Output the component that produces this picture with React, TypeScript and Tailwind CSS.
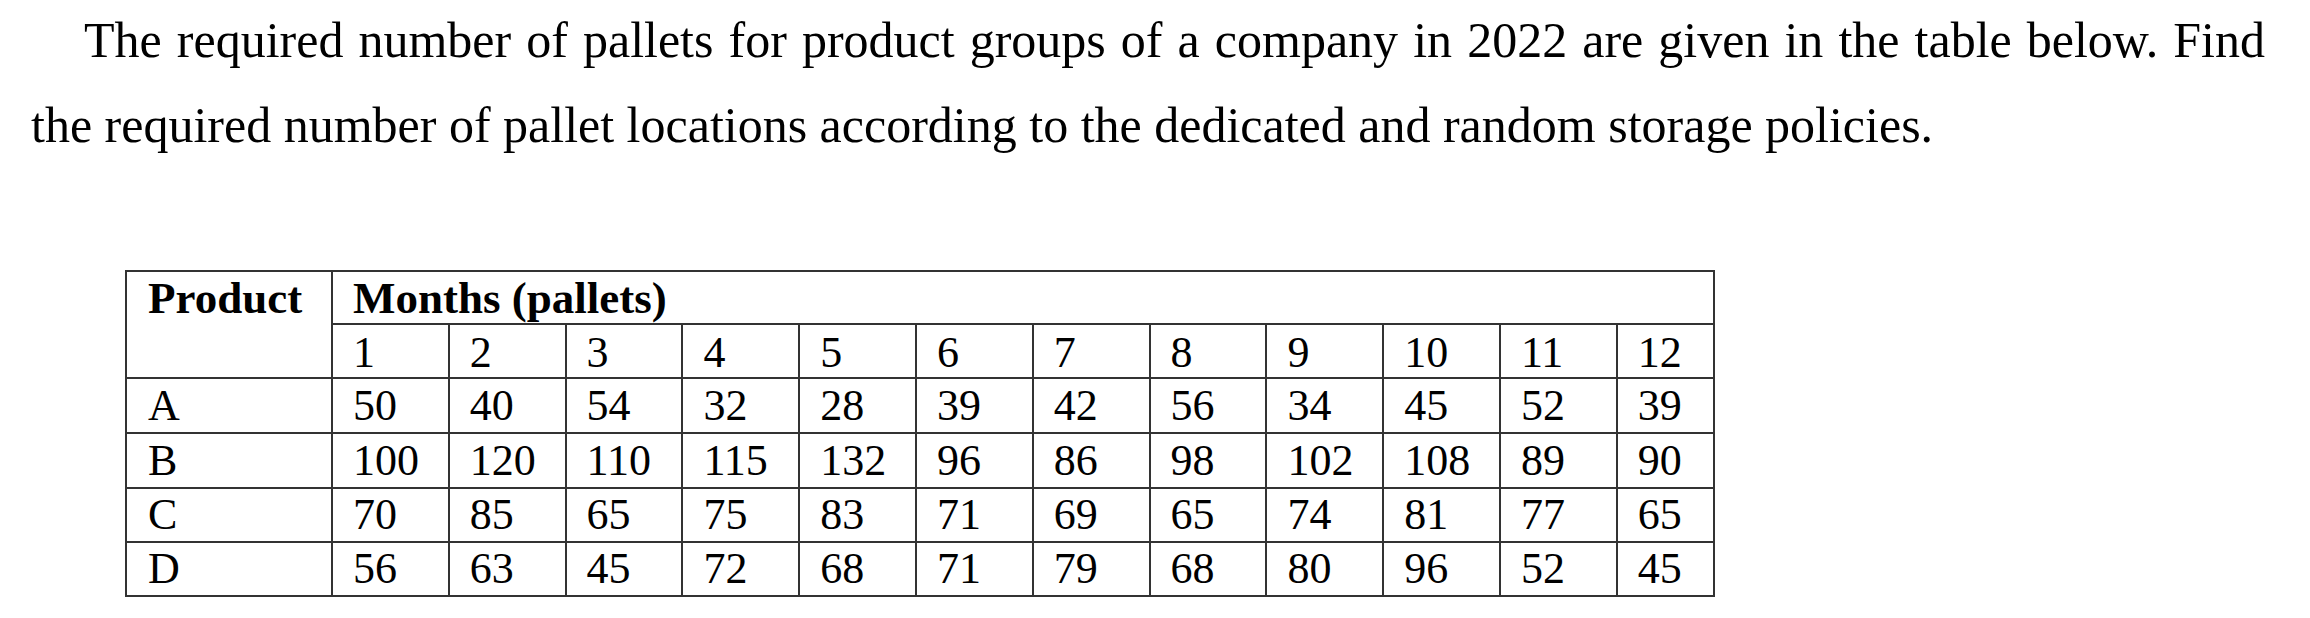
const rows: { name: string; values: number[] }[] = [
  { name: "A", values: [50, 40, 54, 32, 28, 39, 42, 56, 34, 45, 52, 39] },
  { name: "B", values: [100, 120, 110, 115, 132, 96, 86, 98, 102, 108, 89, 90] },
  { name: "C", values: [70, 85, 65, 75, 83, 71, 69, 65, 74, 81, 77, 65] },
  { name: "D", values: [56, 63, 45, 72, 68, 71, 79, 68, 80, 96, 52, 45] },
];

const months = [1, 2, 3, 4, 5, 6, 7, 8, 9, 10, 11, 12];
const rowHeights = ["h-[55px]", "h-[55px]", "h-[54px]", "h-[54px]"];

export default function App() {
  return (
    <div className="w-[2310px] h-[618px] bg-white text-black font-['Liberation_Serif',serif] overflow-hidden">
      <div className="pl-[31px] pr-[45px]">
        <p className="-mt-[2px] text-[50px] leading-[85px] text-justify indent-[53px]">
          The required number of pallets for product groups of a company in 2022 are given in the table below. Find
          the required number of pallet locations according to the dedicated and random storage policies.
        </p>
      </div>

      <div className="mt-[102px] pl-[125px]">
        <table className="table-fixed border-collapse w-[1588px] text-[44px] leading-none">
          <colgroup>
            <col className="w-[206px]" />
            {months.map((m) => (
              <col key={m} className={m === 12 ? "w-[97px]" : "w-[116.8px]"} />
            ))}
          </colgroup>
          <thead>
            <tr className="h-[53px]">
              <th
                rowSpan={2}
                className="border-2 border-[#333] align-top pt-[4px] pl-[21px] text-left text-[45px] font-bold"
              >
                Product
              </th>
              <th
                colSpan={12}
                className="border-2 border-[#333] align-top pt-[4px] pl-[20px] text-left text-[45px] font-bold"
              >
                Months (pallets)
              </th>
            </tr>
            <tr className="h-[54px]">
              {months.map((m) => (
                <td key={m} className="border-2 border-[#333] align-middle pl-[20px] pt-[3px] text-left font-normal">
                  {m}
                </td>
              ))}
            </tr>
          </thead>
          <tbody>
            {rows.map((r, i) => (
              <tr key={r.name} className={rowHeights[i]}>
                <td className="border-2 border-[#333] align-middle pl-[21px] text-left">{r.name}</td>
                {r.values.map((v, j) => (
                  <td key={j} className="border-2 border-[#333] align-middle pl-[20px] text-left">
                    {v}
                  </td>
                ))}
              </tr>
            ))}
          </tbody>
        </table>
      </div>
    </div>
  );
}
